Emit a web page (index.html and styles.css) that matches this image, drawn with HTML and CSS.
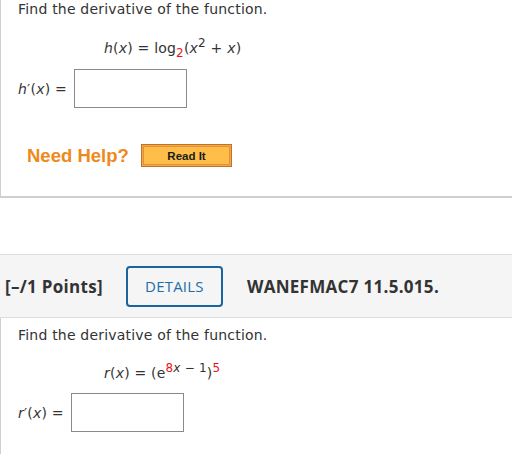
FILE: index.html
```html
<!DOCTYPE html>
<html>
<head>
<meta charset="utf-8">
<link rel="stylesheet" href="styles.css">
</head>
<body>
<div class="question first">
  <p class="prompt">Find the derivative of the function.</p>
  <div class="formula"><i>h</i>(<i>x</i>) = log<sub class="red">2</sub>(<i>x</i><sup>2</sup> + <i>x</i>)</div>
  <div class="answer-row">
    <span class="label"><i>h</i>′(<i>x</i>) =</span>
    <span class="answer-box"></span>
  </div>
  <div class="help-row">
    <span class="need-help">Need Help?</span>
    <span class="read-it"><span class="read-it-inner">Read It</span></span>
  </div>
</div>

<div class="header">
  <span class="points">[–/1 Points]</span>
  <span class="details">DETAILS</span>
  <span class="code">WANEFMAC7 11.5.015.</span>
</div>

<div class="question second">
  <p class="prompt">Find the derivative of the function.</p>
  <div class="formula f2"><i>r</i>(<i>x</i>) = (e<sup><span class="red">8</span><i>x</i> − 1</sup>)<sup class="red">5</sup></div>
  <div class="answer-row r2">
    <span class="label"><i>r</i>′(<i>x</i>) =</span>
    <span class="answer-box"></span>
  </div>
</div>
</body>
</html>
```

FILE: styles.css
```css
html, body {
  margin: 0;
  padding: 0;
  background: #fff;
}
body {
  width: 512px;
  height: 454px;
  overflow: hidden;
  font-family: "DejaVu Sans", Verdana, sans-serif;
  font-size: 14px;
  letter-spacing: 0.2px;
  color: #333;
}
.question {
  border-left: 1px solid #cfcfcf;
  padding-left: 17px;
}
.first {
  height: 196px;
  border-bottom: 2px solid #cfcfcf;
}
.prompt {
  margin: 0;
  padding-top: 2px;
  line-height: 15px;
}
.formula {
  margin-left: 86px;
  margin-top: 23px;
  line-height: 16px;
  white-space: nowrap;
}
.formula sub, .formula sup {
  font-size: 12px;
  line-height: 0;
}
.red { color: #e8141b; }
.answer-row {
  display: flex;
  align-items: center;
  margin-top: 13px;
}
.label {
  width: 56px;
}
.answer-box {
  display: block;
  width: 111px;
  height: 37px;
  border: 1px solid #8a8a8a;
  background: #fff;
}
.help-row {
  display: flex;
  align-items: center;
  margin-top: 36px;
  margin-left: 9px;
}
.need-help {
  font-family: "Liberation Sans", Arial, sans-serif;
  font-weight: bold;
  font-size: 18.5px;
  letter-spacing: 0;
  color: #ee8a1a;
  width: 114px;
}
.read-it {
  display: block;
  border: 1px solid #c0722a;
  background: #f5a93a;
  padding: 1px;
  box-sizing: border-box;
  width: 91px;
  height: 23px;
}
.read-it-inner {
  display: flex;
  align-items: center;
  justify-content: center;
  height: 100%;
  border: 1px solid #e09040;
  box-sizing: border-box;
  background: #ffbe47;
  font-family: "Liberation Sans", Arial, sans-serif;
  font-weight: bold;
  font-size: 11.5px;
  letter-spacing: 0;
  color: #1a1a1a;
}
.header {
  margin-top: 56px;
  height: 64px;
  box-sizing: border-box;
  border-top: 1px solid #dcdcdc;
  border-bottom: 1px solid #dcdcdc;
  background: #f5f5f5;
  display: flex;
  align-items: center;
  padding-left: 5px;
  font-family: "Open Sans", sans-serif;
  font-size: 17px;
  letter-spacing: 0.3px;
  font-weight: bold;
  color: #333;
}
.details {
  margin-left: 23px;
  width: 97px;
  height: 41px;
  box-sizing: border-box;
  border: 2px solid #1a64a0;
  border-radius: 4px;
  display: flex;
  align-items: center;
  justify-content: center;
  font-size: 15px;
  font-weight: 500;
  color: #1f6ea8;
  letter-spacing: 0.2px;
}
.code {
  margin-left: 24px;
}
.second {
  height: 136px;
}
.second .prompt {
  padding-top: 10px;
}
.f2 {
  margin-top: 22px;
}
.r2 {
  margin-top: 12px;
}
.r2 .label {
  width: 53px;
}
```
